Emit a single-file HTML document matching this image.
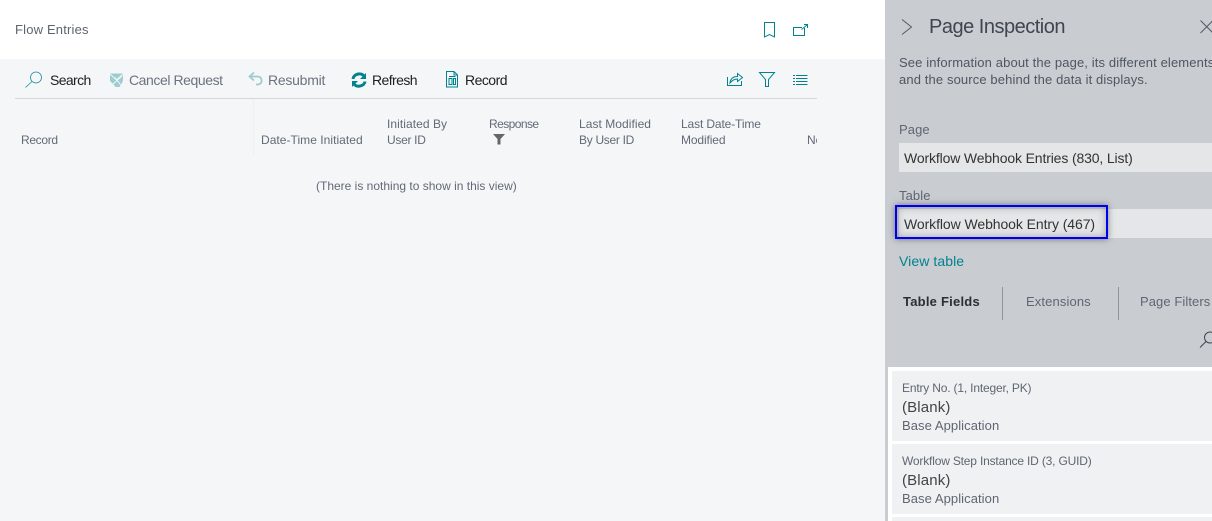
<!DOCTYPE html>
<html><head><meta charset="utf-8"><style>
html,body{margin:0;padding:0;width:1212px;height:521px;overflow:hidden;background:#f5f6f8;font-family:"Liberation Sans",sans-serif}
.a{position:absolute}
.t{position:absolute;white-space:nowrap;font-size:13px;line-height:16px;color:#5f6672}
svg{position:absolute;overflow:visible;fill:none}
</style></head><body>
<div class="a" style="left:0;top:0;width:885px;height:59px;background:#fff"></div>
<div class="t" style="left:15px;top:22px;letter-spacing:.18px;color:#5b6470">Flow Entries</div>
<svg style="left:764px;top:22px" width="12" height="16"><path d="M.5.5H10.500V15L5.500 12.500.5 15Z" stroke="#00838f"/></svg>
<svg style="left:793px;top:24px" width="16" height="12"><path d="M11.500 4V11.500H.5V3.500H9M8.500 5.500 14.500.5M11 .5H14.500V4" stroke="#00838f"/></svg>

<div class="a" style="left:15px;top:98px;width:802px;height:1px;background:#d4d6da"></div>
<svg style="left:25px;top:71px" width="18" height="18"><circle cx="11" cy="6.500" r="5.500" stroke="#1b8f9a" stroke-width=".8"/><path d="M7 10.500.5 16.500" stroke="#1b8f9a" stroke-width=".8"/></svg>
<div class="t" style="left:50px;top:72px;font-size:14px;letter-spacing:-.62px;color:#212121">Search</div>
<svg style="left:106px;top:72px" width="18" height="16"><path d="M4 1.500H17V8L16 11 13.500 15H9.500L7 12 4 9Z" fill="#9ccdd1"/><path d="M4 2 10.500 8 17 2M6 13 16 4M9 5.500 15.500 14" stroke="#f4f5f7" stroke-width="1"/></svg>
<div class="t" style="left:129px;top:72px;font-size:14px;letter-spacing:-.43px;color:#6c7380">Cancel Request</div>
<svg style="left:248px;top:71px" width="16" height="16"><path d="M6 1.500 1.500 5.500 6 9.500M2 5.500H9.500C15 5.500 15 13.500 9.500 13.500H8" stroke="#9ccdd1" stroke-width="1.800"/></svg>
<div class="t" style="left:268px;top:72px;font-size:14px;letter-spacing:-.25px;color:#6c7380">Resubmit</div>
<svg style="left:351px;top:72px" width="16" height="16"><path d="M2 7C2.500 2 10 0 13 4" stroke="#00838f" stroke-width="3"/><path d="M15 1V7H9Z" fill="#00838f"/><path d="M14 9.500C13.500 14 6 16 3 12" stroke="#00838f" stroke-width="3"/><path d="M1 15V9H7Z" fill="#00838f"/></svg>
<div class="t" style="left:372px;top:72px;font-size:14px;letter-spacing:-.58px;color:#212121">Refresh</div>
<svg style="left:446px;top:71px" width="13" height="17"><path d="M.5.500H8L11.500 4V16H.5ZM8 .5V4H11.500M3 5.500H9.500M3 7.500H6V13.500H3ZM7.500 7.500H9.500V13.500H7.500Z" stroke="#00838f"/></svg>
<div class="t" style="left:465px;top:72px;font-size:14px;letter-spacing:-.53px;color:#212121">Record</div>
<svg style="left:727px;top:71px" width="17" height="15"><path d="M.5 6V14.500H14.500V10" stroke="#00838f"/><path d="M3 12C3.500 7 7 5.500 10.500 5.500V2.500L15.500 6.500 10.500 10.500V8C7.500 8 5 9.500 3 12Z" stroke="#00838f"/></svg>
<svg style="left:759px;top:72px" width="17" height="15"><path d="M.5.500H15.500L9.500 7.500V14.500H6.500V7.500Z" stroke="#00838f"/></svg>
<svg style="left:793px;top:75px" width="15" height="11"><path d="M0 .5H2M3 .5H14.500M0 3.500H2M3 3.500H14.500M0 6.500H2M3 6.500H14.500M0 9.500H2M3 9.500H14.500" stroke="#00838f"/></svg>

<div class="a" style="left:253px;top:99px;width:1px;height:56px;background:#eff0f3"></div>
<div class="t" style="left:21px;top:132px;font-size:12px;letter-spacing:-.33px;color:#626a76">Record</div>
<div class="t" style="left:261px;top:132px;font-size:12px;letter-spacing:.04px;color:#626a76">Date-Time Initiated</div>
<div class="t" style="left:387px;top:116px;font-size:12px;letter-spacing:.06px;color:#626a76">Initiated By</div>
<div class="t" style="left:387px;top:132px;font-size:12px;letter-spacing:-.3px;color:#626a76">User ID</div>
<div class="t" style="left:489px;top:116px;font-size:12px;letter-spacing:-.57px;color:#626a76">Response</div>
<svg style="left:493px;top:134px" width="12" height="11"><path d="M0 0H12L7.500 5V10.500H4.500V5Z" fill="#666"/></svg>
<div class="t" style="left:579px;top:116px;font-size:12px;letter-spacing:.05px;color:#626a76">Last Modified</div>
<div class="t" style="left:579px;top:132px;font-size:12px;letter-spacing:-.3px;color:#626a76">By User ID</div>
<div class="t" style="left:681px;top:116px;font-size:12px;letter-spacing:-.13px;color:#626a76">Last Date-Time</div>
<div class="t" style="left:681px;top:132px;font-size:12px;letter-spacing:-.12px;color:#626a76">Modified</div>
<div class="a" style="left:807px;top:132px;width:10px;height:16px;overflow:hidden"><div class="t" style="left:0;top:0;font-size:12px;color:#626a76">No</div></div>
<div class="t" style="left:316px;top:178px;font-size:12px;color:#626a76">(There is nothing to show in this view)</div>

<div class="a" style="left:885px;top:0;width:327px;height:521px;background:#c9ccd1;overflow:hidden">
<svg style="left:16px;top:19px" width="12" height="16"><path d="M1 .5 10.500 8 1 15.500" stroke="#555b65" stroke-width="1"/></svg>
<div class="t" style="left:44px;top:14px;font-size:20px;line-height:26px;letter-spacing:-.5px;color:#3f4650">Page Inspection</div>
<svg style="left:315px;top:20px" width="14" height="14"><path d="M.5.500 13 13M13 .5.500 13" stroke="#555b65"/></svg>
<div class="t" style="left:14px;top:55px;letter-spacing:.13px;color:#4f5661">See information about the page, its different elements,</div>
<div class="t" style="left:14px;top:72px;letter-spacing:.12px;color:#4f5661">and the source behind the data it displays.</div>
<div class="t" style="left:14px;top:122px;letter-spacing:.1px;color:#5f6672">Page</div>
<div class="a" style="left:14px;top:143px;width:313px;height:29px;background:#e5e6e8"></div>
<div class="t" style="left:19px;top:150px;font-size:14px;letter-spacing:-.14px;color:#333">Workflow Webhook Entries (830, List)</div>
<div class="t" style="left:14px;top:188px;letter-spacing:.1px;color:#5f6672">Table</div>
<div class="a" style="left:14px;top:209px;width:313px;height:29px;background:#e5e6e8"></div>
<div class="a" style="left:10px;top:205px;width:209px;height:30px;border:2px solid #0000f0;box-shadow:0 0 6px rgba(40,40,60,.55),inset 0 0 8px rgba(60,60,70,.4)"></div>
<div class="t" style="left:19px;top:216px;font-size:14px;letter-spacing:-.08px;color:#333">Workflow Webhook Entry (467)</div>
<div class="t" style="left:14px;top:253px;font-size:14px;letter-spacing:.08px;color:#00838f">View table</div>
<div class="t" style="left:18px;top:294px;font-weight:700;letter-spacing:.23px;color:#2b2f36">Table Fields</div>
<div class="a" style="left:117px;top:287px;width:1px;height:33px;background:#90949b"></div>
<div class="t" style="left:141px;top:294px;letter-spacing:.12px;color:#5f6672">Extensions</div>
<div class="a" style="left:233px;top:287px;width:1px;height:33px;background:#90949b"></div>
<div class="t" style="left:255px;top:294px;letter-spacing:.08px;color:#5f6672">Page Filters</div>
<svg style="left:314px;top:331px" width="18" height="18"><circle cx="11" cy="6.500" r="5.500" stroke="#3f4650"/><path d="M7 10.500 1 16.500" stroke="#3f4650"/></svg>
<div class="a" style="left:3px;top:367px;width:324px;height:154px;background:#fff"></div>
<div class="a" style="left:7px;top:371px;width:320px;height:70px;background:#f0f1f3"></div>
<div class="a" style="left:7px;top:444px;width:320px;height:70px;background:#f0f1f3"></div>
<div class="a" style="left:7px;top:517px;width:320px;height:4px;background:#f0f1f3"></div>
<div class="t" style="left:17px;top:380px;font-size:12px;letter-spacing:-.18px;color:#5f6672">Entry No. (1, Integer, PK)</div>
<div class="t" style="left:17px;top:399px;font-size:15px;letter-spacing:.15px;line-height:17px;color:#444">(Blank)</div>
<div class="t" style="left:17px;top:418px;letter-spacing:.07px;color:#5f6672">Base Application</div>
<div class="t" style="left:17px;top:453px;font-size:12px;letter-spacing:-.18px;color:#5f6672">Workflow Step Instance ID (3, GUID)</div>
<div class="t" style="left:17px;top:472px;font-size:15px;letter-spacing:.15px;line-height:17px;color:#444">(Blank)</div>
<div class="t" style="left:17px;top:491px;letter-spacing:.07px;color:#5f6672">Base Application</div>
</div>
</body></html>
